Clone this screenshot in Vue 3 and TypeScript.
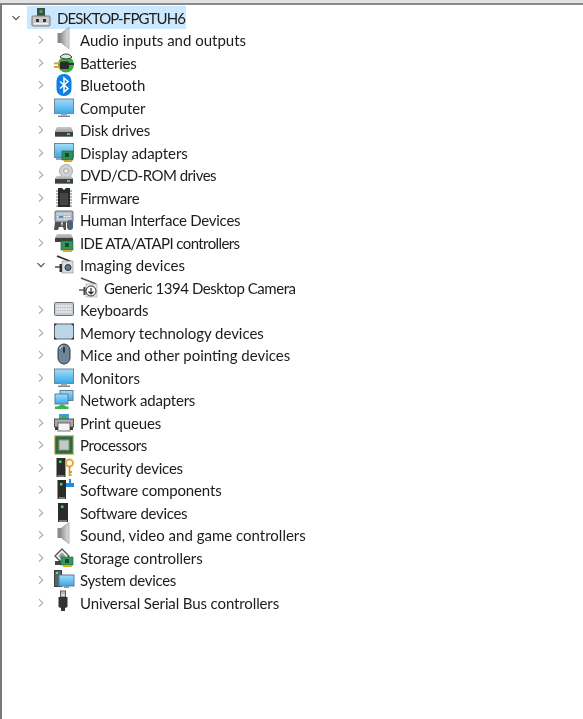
<script setup lang="ts">
interface Row { label: string; icon: string; track?: number; open?: boolean; child?: boolean; leaf?: boolean }
const rows: Row[] = [
  { label: 'Audio inputs and outputs', icon: 'speaker' },
  { label: 'Batteries', icon: 'battery', track: -0.3 },
  { label: 'Bluetooth', icon: 'bluetooth' },
  { label: 'Computer', icon: 'monitor', track: -0.1 },
  { label: 'Disk drives', icon: 'disk', track: -0.2 },
  { label: 'Display adapters', icon: 'display', track: -0.05 },
  { label: 'DVD/CD-ROM drives', icon: 'dvd', track: -0.5 },
  { label: 'Firmware', icon: 'firmware', track: -0.35 },
  { label: 'Human Interface Devices', icon: 'hid', track: -0.25 },
  { label: 'IDE ATA/ATAPI controllers', icon: 'ide', track: -0.6 },
  { label: 'Imaging devices', icon: 'camera', open: true, track: 0.05 },
  { label: 'Generic 1394 Desktop Camera', icon: 'cameraDown', child: true, leaf: true, track: -0.45 },
  { label: 'Keyboards', icon: 'keyboard', track: -0.1 },
  { label: 'Memory technology devices', icon: 'memory', track: -0.04 },
  { label: 'Mice and other pointing devices', icon: 'mouse' },
  { label: 'Monitors', icon: 'monitor' },
  { label: 'Network adapters', icon: 'network', track: -0.2 },
  { label: 'Print queues', icon: 'printer', track: -0.15 },
  { label: 'Processors', icon: 'cpu', track: -0.4 },
  { label: 'Security devices', icon: 'security', track: -0.2 },
  { label: 'Software components', icon: 'components', track: -0.15 },
  { label: 'Software devices', icon: 'tower', track: -0.3 },
  { label: 'Sound, video and game controllers', icon: 'speaker' },
  { label: 'Storage controllers', icon: 'storage', track: -0.05 },
  { label: 'System devices', icon: 'system', track: -0.3 },
  { label: 'Universal Serial Bus controllers', icon: 'usb', track: -0.12 },
]
</script>

<template>
  <div class="window">
    <div class="strip"></div>
    <div class="frame">
      <svg width="0" height="0" class="defs">
        <defs>
          <linearGradient id="screen" x1="0" y1="0" x2="0" y2="1"><stop offset="0" stop-color="#a4dcf8" /><stop offset="1" stop-color="#3aa8ea" /></linearGradient>
          <linearGradient id="cone" x1="0" y1="0" x2="1" y2="0"><stop offset="0" stop-color="#9a9a9a" /><stop offset="1" stop-color="#e2e2e2" /></linearGradient>
          <linearGradient id="drive" x1="0" y1="0" x2="0" y2="1"><stop offset="0" stop-color="#c8c8c8" /><stop offset="1" stop-color="#7a7a7a" /></linearGradient>
        </defs>
      </svg>
      <div class="row root">
        <svg class="chev" viewBox="0 0 10 10"><path d="M1.5 3.2l3.5 3.5 3.5-3.5" /></svg>
        <div class="root-pill">
          <svg class="icon" viewBox="0 0 20 20">
            <rect x="6" y="0" width="8" height="9" fill="#3f4a44" />
            <rect x="8.5" y="2" width="3" height="3" fill="#3aa860" />
            <rect x="1" y="8" width="18" height="10" rx="1" fill="#c9c9c9" stroke="#7a7a7a" />
            <rect x="5" y="11" width="3" height="3" fill="#333" />
            <rect x="12" y="11" width="3" height="3" fill="#333" />
            <rect x="3" y="15" width="14" height="1.5" fill="#f2f2f2" />
          </svg>
          <span class="label root-label">DESKTOP-FPGTUH6</span>
        </div>
      </div>
      <div v-for="r in rows" :key="r.label" class="row" :class="{ child: r.child }">
        <svg v-if="!r.leaf" class="chev" :class="{ closed: !r.open }" viewBox="0 0 10 10">
          <path v-if="r.open" d="M1.5 3.2l3.5 3.5 3.5-3.5" />
          <path v-else d="M3 1.2l3.7 3.7L3 8.6" />
        </svg>
        <svg class="icon" viewBox="0 0 20 20">
          <template v-if="r.icon === 'speaker'">
            <rect x="3.5" y="3" width="4" height="10" fill="#8a8a8a" />
            <path d="M7.5 3l7.5-5.5v21L7.5 13z" fill="url(#cone)" stroke="#8c8c8c" stroke-width=".6" />
          </template>
          <template v-else-if="r.icon === 'battery'">
            <circle cx="12" cy="11.5" r="8" fill="#3cab3c" />
            <path d="M6 4c3-4 9-4 12 0-3 2.5-9 2.5-12 0z" fill="#dfe8df" stroke="#3a3a3a" />
            <rect x="6" y="8.5" width="9" height="7.5" rx="1.5" fill="#2a2a2a" />
            <rect x="0" y="9.5" width="6" height="1.8" fill="#d69a1f" />
            <rect x="0" y="13" width="6" height="1.8" fill="#d69a1f" />
            <path d="M15 11h5" stroke="#2a2a2a" stroke-width="1.8" />
          </template>
          <template v-else-if="r.icon === 'bluetooth'">
            <rect x="2.5" y="-1" width="15" height="22" rx="7" fill="#0f7fe6" />
            <path d="M6 6.5l8 7-4 3.5V3l4 3.5-8 7" fill="none" stroke="#fff" stroke-width="1.5" />
          </template>
          <template v-else-if="r.icon === 'monitor'">
            <rect x="0.5" y="1" width="19" height="14.5" fill="url(#screen)" stroke="#6f8796" />
            <rect x="7" y="15.5" width="6" height="2" fill="#9aa4aa" />
            <rect x="4" y="17.5" width="12" height="1.5" fill="#7e878c" />
          </template>
          <template v-else-if="r.icon === 'disk'">
            <path d="M3 7h14l2 4v5.5H1V11z" fill="url(#drive)" />
            <rect x="1" y="12" width="18" height="4.5" fill="#3f3f3f" />
            <rect x="13" y="13" width="3" height="2" fill="#3fdc4a" />
          </template>
          <template v-else-if="r.icon === 'display'">
            <rect x="0.5" y="0.5" width="19" height="14" fill="url(#screen)" stroke="#6f8796" />
            <rect x="2" y="15" width="6" height="2" fill="#9aa4aa" />
            <rect x="8" y="8" width="11" height="9" fill="#2f8f57" stroke="#1d5f3a" stroke-width=".6" />
            <rect x="11" y="10" width="4" height="4" fill="#1c4a30" />
            <rect x="10" y="17" width="8" height="2" fill="#d6a324" />
          </template>
          <template v-else-if="r.icon === 'dvd'">
            <circle cx="12" cy="6" r="6.5" fill="#d2d2d2" stroke="#8e8e8e" stroke-width=".7" />
            <circle cx="12" cy="6" r="2.3" fill="#f0f0f0" stroke="#8a8a8a" stroke-width=".7" />
            <path d="M3 11h14l2 2v5.5H1V13z" fill="url(#drive)" />
            <rect x="1" y="14" width="18" height="4.5" fill="#3f3f3f" />
            <rect x="13" y="15" width="3" height="2" fill="#3fdc4a" />
          </template>
          <template v-else-if="r.icon === 'firmware'">
            <path d="M4 0h4l2 2 2-2h4v19H4z" fill="#2a2a2a" />
            <path d="M2 3h2M2 6h2M2 9h2M2 12h2M2 15h2M2 18h2M16 3h2M16 6h2M16 9h2M16 12h2M16 15h2M16 18h2" stroke="#6a6a6a" stroke-width="1.2" />
            <rect x="6" y="5" width="8" height="12" fill="#454545" />
          </template>
          <template v-else-if="r.icon === 'hid'">
            <rect x="1" y="1" width="18" height="11" rx="1" fill="#b4bbc4" stroke="#555" stroke-width=".8" />
            <path d="M3 4h14M3 6.5h14M3 9h14" stroke="#f2f2f2" stroke-dasharray="1.5 .8" />
            <path d="M5 6h4v2H5z" fill="#3f8fd8" />
            <path d="M0 20l1-8h6l1 5 1-5h3v8h-2l-1-3H5l-1 3z" fill="#4f5358" />
            <rect x="13" y="10" width="6" height="10" rx="3" fill="#4f5f78" />
          </template>
          <template v-else-if="r.icon === 'ide'">
            <path d="M3 1h14l2 4v4H1V5z" fill="url(#drive)" />
            <rect x="1" y="5" width="18" height="4" fill="#3f3f3f" />
            <rect x="7" y="8" width="12" height="9" fill="#2f9a5c" stroke="#1d5f3a" stroke-width=".6" />
            <rect x="11" y="10" width="4" height="4" fill="#1c4a30" />
            <rect x="9" y="17" width="9" height="2" fill="#e0aa22" />
          </template>
          <template v-else-if="r.icon === 'camera'">
            <path d="M3 1l15 6" stroke="#2d2d2d" stroke-width="1.8" />
            <rect x="8" y="6" width="11" height="12" fill="#dcdcdc" stroke="#8a8a8a" stroke-width=".6" />
            <circle cx="14" cy="12.5" r="3" fill="#4e7e93" stroke="#333" />
            <rect x="1" y="11" width="5" height="2" fill="#777" />
            <rect x="5.5" y="9" width="2.5" height="8" fill="#333" />
          </template>
          <template v-else-if="r.icon === 'cameraDown'">
            <path d="M3 0l15 6" stroke="#555" stroke-width="1.6" />
            <rect x="8" y="6" width="11" height="13" fill="#e2e2e2" stroke="#aaa" stroke-width=".6" />
            <rect x="1" y="11" width="5" height="2" fill="#888" />
            <rect x="5.5" y="9" width="2" height="8" fill="#444" />
            <circle cx="13" cy="13" r="5" fill="#fff" stroke="#333" />
            <path d="M13 10v6M10.5 13.5l2.5 2.5 2.5-2.5" fill="none" stroke="#222" stroke-width="1.2" />
          </template>
          <template v-else-if="r.icon === 'keyboard'">
            <rect x="0.5" y="2.5" width="19" height="13" rx="1" fill="#c5cbd1" stroke="#68717a" />
            <path d="M2.5 6h15M2.5 9h15M2.5 12h15" stroke="#f3f3f3" stroke-width="1.4" stroke-dasharray="1.6 .6" />
          </template>
          <template v-else-if="r.icon === 'memory'">
            <rect x="0.5" y="1" width="19" height="15" rx="2" fill="#bcd6e8" stroke="#59646c" />
            <path d="M0 .5h3L0 3.5zM20 .5h-3l3 3zM0 16.5h3l-3-3zM20 16.5h-3l3-3z" fill="#2f2f2f" />
          </template>
          <template v-else-if="r.icon === 'mouse'">
            <rect x="4" y="-1" width="12" height="20" rx="6" fill="#6e8499" stroke="#2e3640" />
            <rect x="9" y="2" width="2" height="6" rx="1" fill="#2e3640" />
            <path d="M6 4c0-2 2-3 3-3" stroke="#dfe7ee" fill="none" />
          </template>
          <template v-else-if="r.icon === 'network'">
            <rect x="6" y="0.5" width="13" height="10" fill="url(#screen)" stroke="#5d7f96" />
            <rect x="1" y="4" width="13" height="10" fill="url(#screen)" stroke="#5d7f96" />
            <path d="M8 14l4.5 2.5h2v2.5H1v-2.5h2.5z" fill="#3fb34a" />
          </template>
          <template v-else-if="r.icon === 'printer'">
            <rect x="5" y="1" width="10" height="6" fill="#3f9fd8" />
            <rect x="8" y="2" width="4" height="4" fill="#3ab54a" />
            <rect x="0.5" y="6" width="19" height="8" fill="#a8a8a8" stroke="#555" />
            <rect x="4" y="10" width="12" height="8" fill="#f4f4f4" stroke="#555" stroke-width=".8" />
            <rect x="1" y="14" width="3" height="3" fill="#3d3d3d" />
            <rect x="16" y="14" width="3" height="3" fill="#3d3d3d" />
          </template>
          <template v-else-if="r.icon === 'cpu'">
            <rect x="0.75" y="0.75" width="18.5" height="18.5" fill="#2f6a3f" stroke="#d9b23c" stroke-width="1.5" stroke-dasharray="1.2 .8" />
            <rect x="5" y="5" width="10" height="10" fill="#c4c9c6" stroke="#8b908c" />
          </template>
          <template v-else-if="r.icon === 'security'">
            <rect x="2.5" y="0" width="9" height="19" fill="#2b2b2b" />
            <rect x="5" y="2.5" width="2.5" height="2.5" fill="#3fe05a" />
            <rect x="3.5" y="17" width="7" height="2" fill="#777" />
            <circle cx="15.5" cy="5" r="3.5" fill="none" stroke="#e2ad3c" stroke-width="2" />
            <path d="M15.5 8v10M15.5 14h2.5M15.5 17h2" stroke="#d89f2e" stroke-width="1.8" />
          </template>
          <template v-else-if="r.icon === 'components'">
            <rect x="3.5" y="0" width="8.5" height="19" fill="#2b2b2b" />
            <rect x="6" y="3" width="2.5" height="2.5" fill="#3fe05a" />
            <rect x="4.5" y="17" width="6.5" height="2" fill="#777" />
            <path d="M12 3h3v-4h2v4h3v4h-8z" fill="#1a8ee0" />
          </template>
          <template v-else-if="r.icon === 'tower'">
            <rect x="4" y="0" width="10" height="19" fill="#2b2b2b" />
            <rect x="7" y="2.5" width="2.5" height="2.5" fill="#3fe05a" />
            <rect x="5" y="17" width="8" height="2" fill="#777" />
          </template>
          <template v-else-if="r.icon === 'storage'">
            <path d="M1 8l7-7 7 7-7 7z" fill="#eee" stroke="#555" stroke-width="1.3" />
            <path d="M4.5 8l3.5-3.5L11.5 8 8 11.5z" fill="#9a9a9a" />
            <rect x="1" y="13" width="8" height="4" fill="#444" />
            <rect x="7" y="9" width="12" height="8" fill="#2f9a5c" stroke="#1d5f3a" stroke-width=".6" />
            <rect x="11" y="11" width="4" height="4" fill="#1c4a30" />
            <rect x="9" y="17" width="9" height="2" fill="#e0aa22" />
          </template>
          <template v-else-if="r.icon === 'system'">
            <rect x="0.5" y="0.5" width="7" height="16" fill="#5b6268" stroke="#3a3f44" />
            <rect x="2" y="2" width="2" height="2" fill="#6fe07a" />
            <rect x="5" y="5" width="15" height="11" fill="url(#screen)" stroke="#5d7f96" />
            <rect x="10" y="16" width="5" height="2" fill="#8f989d" />
          </template>
          <template v-else-if="r.icon === 'usb'">
            <rect x="6.5" y="-2" width="5" height="6" fill="#d9d9d9" stroke="#555" />
            <path d="M7.6 0h.8M9.6 0h.8" stroke="#333" />
            <path d="M4.5 4h9v10l-2.5 1v3H7v-3l-2.5-1z" fill="#333" />
          </template>
        </svg>
        <span class="label" :style="{ letterSpacing: (r.track ?? 0) + 'px' }">{{ r.label }}</span>
      </div>
    </div>
  </div>
</template>

<style scoped>
.window {
  display: flex;
  flex-direction: column;
  height: 719px;
  background: #fff;
  font-family: Lato, "Open Sans", sans-serif;
  font-size: 15px;
  color: #1c1c1c;
  overflow: hidden;
  filter: blur(0.3px);
}
.strip {
  height: 3px;
  background: #e2e2e2;
  flex: none;
}
.frame {
  flex: 1;
  border-top: 2px solid #8a8a8a;
  border-left: 2px solid #7a7a7a;
  padding-top: 1.5px;
}
.defs { position: absolute; }
.row {
  height: 22.5px;
  display: flex;
  align-items: center;
  position: relative;
  padding-left: 52px;
}
.row.child { padding-left: 76px; }
.row.root { padding-left: 25px; }
.root-pill {
  display: flex;
  align-items: center;
  height: 23px;
  background: #cce8ff;
  padding: 0 1px 0 4px;
}
.root-label { letter-spacing: -0.87px; }
.icon {
  width: 20px;
  height: 20px;
  flex: none;
  overflow: visible;
  margin-right: 6px;
}
.chev {
  position: absolute;
  left: 34px;
  top: 6.25px;
  width: 10px;
  height: 10px;
  fill: none;
  stroke: #4a4a4a;
  stroke-width: 1.1;
}
.chev.closed { stroke: #a6a6a6; }
.row.root .chev { left: 9px; }
.label { white-space: nowrap; }
</style>
